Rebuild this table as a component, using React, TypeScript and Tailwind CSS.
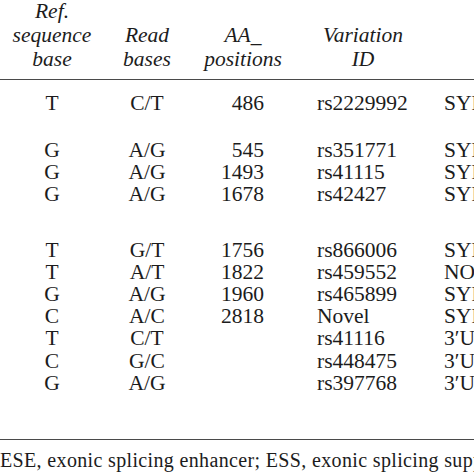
import React from "react";

// one row of the variant table
interface Variant {
  refBase: string;
  readBases: string;
  position?: number;
  variationId: string;
  effect: string;
}

const groups: Variant[][] = [
  [{ refBase: "T", readBases: "C/T", position: 486, variationId: "rs2229992", effect: "SYN" }],
  [
    { refBase: "G", readBases: "A/G", position: 545, variationId: "rs351771", effect: "SYN" },
    { refBase: "G", readBases: "A/G", position: 1493, variationId: "rs41115", effect: "SYN" },
    { refBase: "G", readBases: "A/G", position: 1678, variationId: "rs42427", effect: "SYN" },
  ],
  [
    { refBase: "T", readBases: "G/T", position: 1756, variationId: "rs866006", effect: "SYN" },
    { refBase: "T", readBases: "A/T", position: 1822, variationId: "rs459552", effect: "NON" },
    { refBase: "G", readBases: "A/G", position: 1960, variationId: "rs465899", effect: "SYN" },
    { refBase: "C", readBases: "A/C", position: 2818, variationId: "Novel", effect: "SYN" },
    { refBase: "T", readBases: "C/T", variationId: "rs41116", effect: "3\u2032UTR" },
    { refBase: "C", readBases: "G/C", variationId: "rs448475", effect: "3\u2032UTR" },
    { refBase: "G", readBases: "A/G", variationId: "rs397768", effect: "3\u2032UTR" },
  ],
];

const cols = "grid grid-cols-[104px_86px_106px_134px_1fr]";

const Row = ({ v }: { v: Variant }) => (
  <div className={`${cols} leading-[22.2px] whitespace-nowrap`}>
    <div className="text-center">{v.refBase}</div>
    <div className="text-center">{v.readBases}</div>
    <div className="text-right pr-[32px]">{v.position ?? ""}</div>
    <div className="pl-[21px]">{v.variationId}</div>
    <div className="pl-[14px] overflow-hidden">{v.effect}</div>
  </div>
);

const App = () => {
  return (
    <div
      className="w-[474px] h-[474px] overflow-hidden bg-white text-[#1c1c1c] text-[21.5px] flex flex-col"
      style={{ fontFamily: '"Liberation Serif", "DejaVu Serif", serif' }}
    >
      {/* header */}
      <div className={`${cols} items-end italic leading-[24px] text-center -mt-[1px] whitespace-nowrap`}>
        <div>
          Ref.
          <br />
          sequence
          <br />
          base
        </div>
        <div>
          Read
          <br />
          bases
        </div>
        <div>
          AA_
          <br />
          positions
        </div>
        <div>
          Variation
          <br />
          ID
        </div>
        <div></div>
      </div>

      <div className="h-px bg-[#4a4a4a] mt-[8px] shrink-0"></div>

      <div className="mt-[11.6px]">
        {groups[0].map((v, i) => (
          <Row key={i} v={v} />
        ))}
      </div>
      <div className="mt-[24.8px]">
        {groups[1].map((v, i) => (
          <Row key={i} v={v} />
        ))}
      </div>
      <div className="mt-[33.4px]">
        {groups[2].map((v, i) => (
          <Row key={i} v={v} />
        ))}
      </div>

      <div className="h-px bg-[#4a4a4a] mt-[45px] shrink-0"></div>

      <p className="mt-[9px] text-[20px] leading-[22px] tracking-[0.35px] whitespace-nowrap">
        ESE, exonic splicing enhancer; ESS, exonic splicing suppressor.
      </p>
    </div>
  );
};

export default App;
